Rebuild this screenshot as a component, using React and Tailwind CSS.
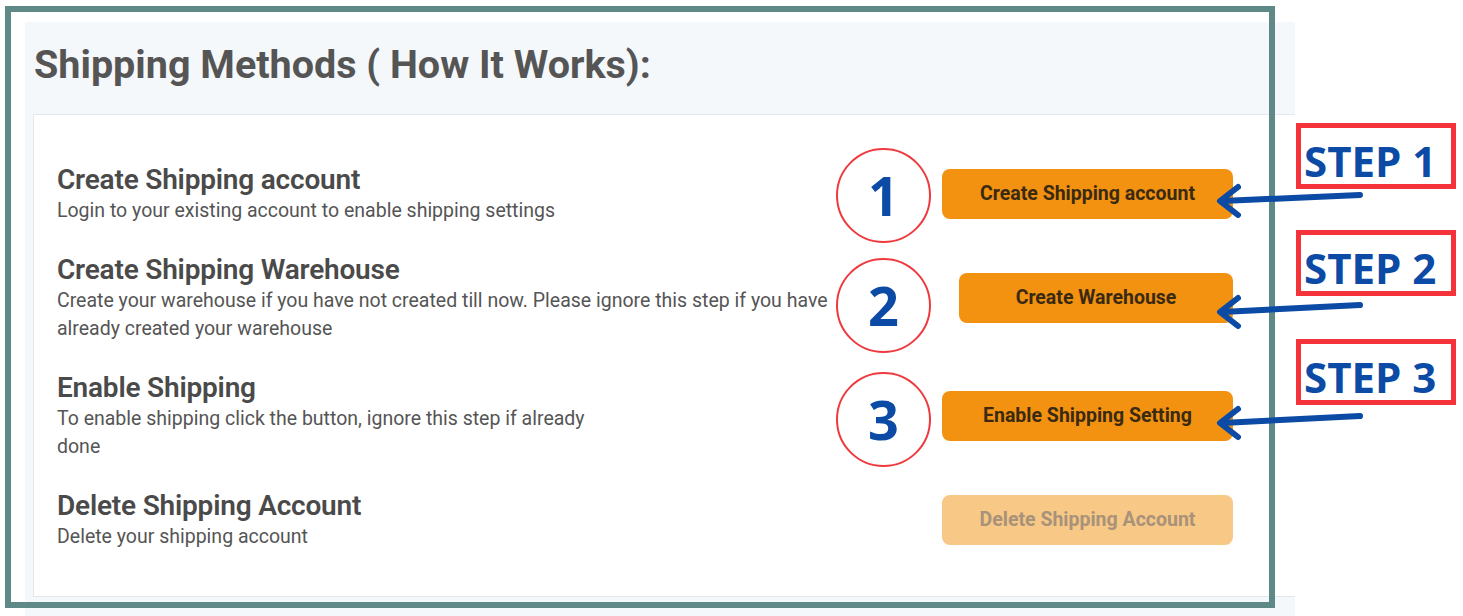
import React from 'react';

const steps = [
  {
    title: 'Create Shipping account',
    desc: 'Login to your existing account to enable shipping settings',
    button: 'Create Shipping account',
    descWidth: 'w-[785px]',
    btnWidth: 'w-[291px]',
  },
  {
    title: 'Create Shipping Warehouse',
    desc: 'Create your warehouse if you have not created till now. Please ignore this step if you have already created your warehouse',
    button: 'Create Warehouse',
    descWidth: 'w-[785px]',
    btnWidth: 'w-[274px]',
  },
  {
    title: 'Enable Shipping',
    desc: 'To enable shipping click the button, ignore this step if already done',
    button: 'Enable Shipping Setting',
    descWidth: 'w-[560px]',
    btnWidth: 'w-[291px]',
  },
  {
    title: 'Delete Shipping Account',
    desc: 'Delete your shipping account',
    button: 'Delete Shipping Account',
    descWidth: 'w-[785px]',
    btnWidth: 'w-[291px]',
    disabled: true,
  },
];

// callouts drawn on top of the settings card
const marks = [
  { n: '1', circle: 'top-[148px]', box: 'top-[123px]', label: 'STEP 1' },
  { n: '2', circle: 'top-[258px]', box: 'top-[230px]', label: 'STEP 2' },
  { n: '3', circle: 'top-[372px]', box: 'top-[339px]', label: 'STEP 3' },
];

const arrows = [
  { y1: 195, y2: 201 },
  { y1: 305, y2: 312 },
  { y1: 416, y2: 423 },
];

function StepRow({ step }) {
  return (
    <div className="flex items-center justify-between">
      <div className={step.descWidth}>
        <h3 className="text-[28px] leading-[34px] font-semibold tracking-[-0.2px] text-[#4a4a4a]">{step.title}</h3>
        <p className="text-[19.5px] leading-[28px] text-[#555]">{step.desc}</p>
      </div>
      <button
        type="button"
        disabled={step.disabled}
        className={
          step.disabled
            ? `${step.btnWidth} h-[50px] rounded-lg bg-[#f8c886] text-[19.5px] font-bold text-[#a8927a]`
            : `${step.btnWidth} h-[50px] rounded-lg bg-[#f39110] text-[19.5px] font-bold text-[#3a2a12]`
        }
      >
        {step.button}
      </button>
    </div>
  );
}

export default function App() {
  return (
    <div className="relative h-[616px] w-[1463px] overflow-hidden bg-white font-['Roboto',sans-serif]">
      <div className="ml-[25px] mt-[22px] h-[600px] w-[1270px] bg-[#f5f8fb] pl-[8px]">
        <h1 className="flex h-[92px] items-center pb-[6px] pl-[1px] text-[39.5px] font-bold text-[#555]">
          Shipping Methods ( How It Works):
        </h1>
        <div className="flex h-[483px] flex-col gap-[28px] border border-r-0 border-[#e3e7eb] bg-white pl-[23px] pr-[62px] pt-[48px]">
          {steps.map((s) => (
            <StepRow key={s.title} step={s} />
          ))}
        </div>
      </div>

      {/* teal frame */}
      <div className="pointer-events-none absolute left-[5px] top-[6px] h-[602px] w-[1270px] border-[6px] border-[#5f8986]" />

      {marks.map((m) => (
        <React.Fragment key={m.n}>
          <div
            className={`absolute left-[836px] ${m.circle} flex h-[95px] w-[95px] items-center justify-center rounded-full border-2 border-[#ee3a3f] font-['Open_Sans',sans-serif] text-[54px] font-bold text-[#0b4aa5]`}
          >
            {m.n}
          </div>
          <div
            className={`absolute left-[1296px] ${m.box} flex h-[66px] w-[160px] items-end border-[5px] border-[#f5333a] bg-white pl-[3px] font-['Open_Sans',sans-serif] text-[42px] font-bold leading-[46px] text-[#0b4aa5]`}
          >
            {m.label}
          </div>
        </React.Fragment>
      ))}

      <svg className="pointer-events-none absolute left-0 top-0" width="1463" height="616">
        {arrows.map((a, i) => (
          <g key={i} stroke="#0b4aa5" strokeWidth="6" fill="none" strokeLinecap="round" strokeLinejoin="round">
            <line x1="1360" y1={a.y1} x2="1222" y2={a.y2} />
            <polyline points={`1238,${a.y2 - 14} 1220,${a.y2} 1238,${a.y2 + 14}`} />
          </g>
        ))}
      </svg>
    </div>
  );
}
